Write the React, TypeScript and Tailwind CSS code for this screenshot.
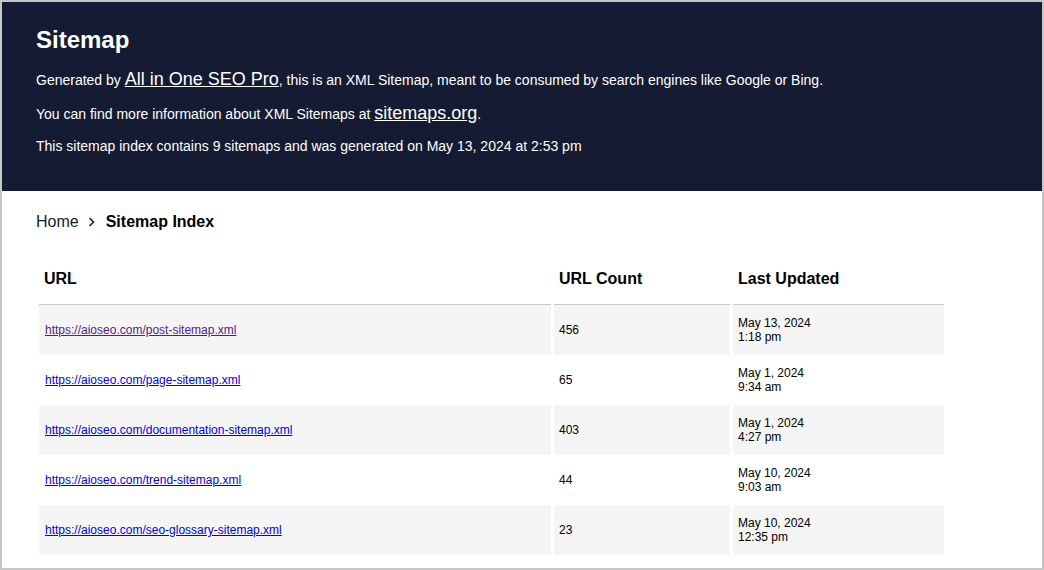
import React from "react";

type SitemapRow = {
  url: string;
  count: number;
  date: string;
  time: string;
  visited?: boolean;
};

const rows: SitemapRow[] = [
  { url: "https://aioseo.com/post-sitemap.xml", count: 456, date: "May 13, 2024", time: "1:18 pm", visited: true },
  { url: "https://aioseo.com/page-sitemap.xml", count: 65, date: "May 1, 2024", time: "9:34 am" },
  { url: "https://aioseo.com/documentation-sitemap.xml", count: 403, date: "May 1, 2024", time: "4:27 pm" },
  { url: "https://aioseo.com/trend-sitemap.xml", count: 44, date: "May 10, 2024", time: "9:03 am" },
  { url: "https://aioseo.com/seo-glossary-sitemap.xml", count: 23, date: "May 10, 2024", time: "12:35 pm" },
];

const Chevron = () => (
  <svg width="8" height="10" viewBox="0 0 8 10" className="ml-[9px] mr-[10px]" aria-hidden>
    <path d="M2 1.5 L5.5 5 L2 8.5" fill="none" stroke="#141b33" strokeWidth="1.6" strokeLinecap="round" strokeLinejoin="round" />
  </svg>
);

export default function App() {
  return (
    <div
      className="h-[570px] w-[1044px] overflow-hidden border-2 border-[#c6c6c6] bg-white text-black"
      style={{ fontFamily: '"Liberation Sans", Arial, sans-serif' }}
    >
      {/* Header */}
      <header className="h-[189px] bg-[#141b33] px-[34px] pt-[22px] text-white">
        <h1 className="text-[24px] font-bold leading-[32px]">Sitemap</h1>
        <p className="mt-[14px] text-[14px] leading-[20px]">
          Generated by{" "}
          <a href="#" className="text-[18px] leading-none text-white underline">
            All in One SEO Pro
          </a>
          , this is an XML Sitemap, meant to be consumed by search engines like Google or Bing.
        </p>
        <p className="mt-[14px] text-[14px] leading-[20px]">
          You can find more information about XML Sitemaps at{" "}
          <a href="#" className="text-[18px] leading-none text-white underline">
            sitemaps.org
          </a>
          .
        </p>
        <p className="mt-[12px] text-[14px] leading-[20px]">
          This sitemap index contains 9 sitemaps and was generated on May 13, 2024 at 2:53 pm
        </p>
      </header>

      {/* Content */}
      <main className="px-[34px]">
        <nav className="mt-[19px] flex items-center text-[16px] leading-[24px]">
          <a href="#" className="text-[#141b33]">Home</a>
          <Chevron />
          <span className="font-bold">Sitemap Index</span>
        </nav>

        <table className="mt-[23px] border-separate border-spacing-x-[3px] border-spacing-y-0">
          <thead>
            <tr>
              <th className="h-[48px] w-[512px] border-b border-[#c8c8c8] pb-[15px] pl-[5px] text-left align-bottom text-[16px] font-bold leading-[20px]">URL</th>
              <th className="h-[48px] w-[176px] border-b border-[#c8c8c8] pb-[15px] pl-[5px] text-left align-bottom text-[16px] font-bold leading-[20px]">URL Count</th>
              <th className="h-[48px] w-[211px] border-b border-[#c8c8c8] pb-[15px] pl-[5px] text-left align-bottom text-[16px] font-bold leading-[20px]">Last Updated</th>
            </tr>
          </thead>
          <tbody>
            {rows.map((row, i) => (
              <tr key={row.url} className={i % 2 === 0 ? "bg-[#f5f5f5]" : "bg-white"}>
                <td className="h-[50px] pl-[6px] align-middle text-[12px] leading-[14px]">
                  <a href="#" className={row.visited ? "text-[#551a8b] underline" : "text-[#0000ee] underline"}>
                    {row.url}
                  </a>
                </td>
                <td className="h-[50px] pl-[5px] align-middle text-[12px] leading-[14px]">{row.count}</td>
                <td className="h-[50px] pl-[5px] align-middle text-[12px] leading-[14px]">
                  {row.date}
                  <br />
                  {row.time}
                </td>
              </tr>
            ))}
          </tbody>
        </table>
      </main>
    </div>
  );
}
